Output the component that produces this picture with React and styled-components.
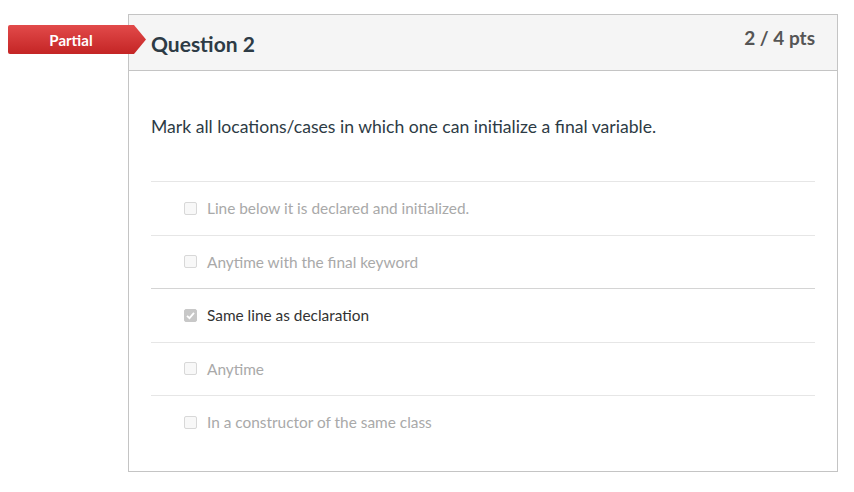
import React from "react";
import styled, { createGlobalStyle } from "styled-components";

const GlobalStyle = createGlobalStyle`
	body {
		margin: 0;
		background: #ffffff;
		font-family: Lato, "Liberation Sans", sans-serif;
	}
`;

const answers = [
	{ text: "Line below it is declared and initialized.", checked: false },
	{ text: "Anytime with the final keyword", checked: false },
	{ text: "Same line as declaration", checked: true },
	{ text: "Anytime", checked: false },
	{ text: "In a constructor of the same class", checked: false },
];

const App = () => {
	return (
		<>
			<GlobalStyle />
			<Page>
				<Card>
					<Badge>Partial</Badge>
					<Header>
						<Title>Question 2</Title>
						<Points>2 / 4 pts</Points>
					</Header>
					<Body>
						<Prompt>
							Mark all locations/cases in which one can initialize a final
							variable.
						</Prompt>
						<AnswerList>
							{answers.map((answer) => (
								<Answer key={answer.text}>
									<Box checked={answer.checked}>
										{answer.checked && (
											<svg width="11" height="11" viewBox="0 0 11 11">
												<path
													d="M2 5.8 L4.5 8.2 L9 2.8"
													fill="none"
													stroke="#ffffff"
													strokeWidth="1.8"
												/>
											</svg>
										)}
									</Box>
									<AnswerText checked={answer.checked}>{answer.text}</AnswerText>
								</Answer>
							))}
						</AnswerList>
					</Body>
				</Card>
			</Page>
		</>
	);
};

export default App;

const Page = styled.div`
	padding: 14px 0 0 128px;
`;

const Card = styled.div`
	position: relative;
	width: 708px;
	height: 456px;
	border: 1px solid #c4c4c4;
	background: #ffffff;
`;

const Badge = styled.div`
	position: absolute;
	left: -121px;
	top: 10px;
	width: 138px;
	height: 29px;
	box-sizing: border-box;
	padding-right: 12px;
	display: flex;
	align-items: center;
	justify-content: center;
	color: #ffffff;
	font-size: 15px;
	font-weight: 700;
	background: linear-gradient(#e24a4a, #c42525);
	clip-path: polygon(0 0, 126px 0, 138px 50%, 126px 100%, 0 100%);
	border-radius: 2px 0 0 2px;
`;

const Header = styled.div`
	height: 55px;
	background: #f5f5f5;
	border-bottom: 1px solid #c4c4c4;
	display: flex;
	justify-content: space-between;
	padding: 0 22px;
`;

const Title = styled.h2`
	margin: 0;
	padding-top: 16px;
	font-size: 21px;
	font-weight: 700;
	color: #2d3b45;
`;

const Points = styled.div`
	padding-top: 11px;
	font-size: 19px;
	font-weight: 700;
	color: #555555;
`;

const Body = styled.div`
	padding: 45px 22px 0;
`;

const Prompt = styled.p`
	margin: 0 0 43px;
	font-size: 17.6px;
	line-height: 22px;
	color: #2d3b45;
`;

const AnswerList = styled.div``;

const Answer = styled.div`
	height: 52.5px;
	border-top: 1px solid #e6e6e6;
	display: flex;
	align-items: center;
	padding-left: 33px;
	&:nth-child(3) {
		border-top-color: #d4d4d4;
	}
`;

const Box = styled.span`
	width: 13px;
	height: 13px;
	box-sizing: border-box;
	border: 1px solid ${(props) => (props.checked ? "#c8c8c8" : "#d8d8d8")};
	background: ${(props) => (props.checked ? "#c8c8c8" : "#f8f8f8")};
	border-radius: 2px;
	margin-right: 10px;
	display: flex;
	align-items: center;
	justify-content: center;
`;

const AnswerText = styled.span`
	font-size: 15.4px;
	color: ${(props) => (props.checked ? "#333333" : "#a9a9a9")};
`;
